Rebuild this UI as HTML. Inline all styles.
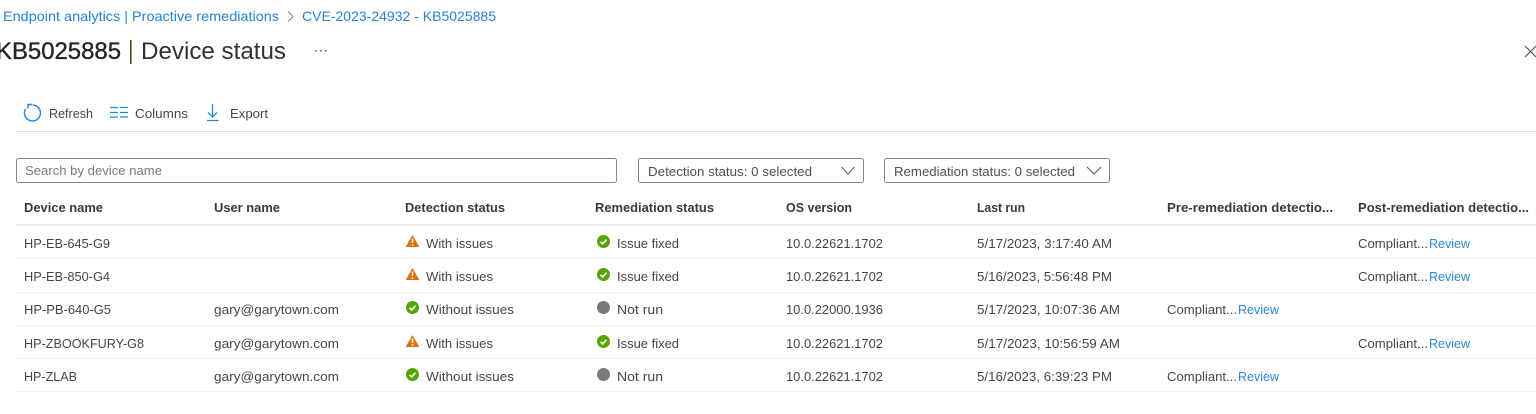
<!DOCTYPE html>
<html><head><meta charset="utf-8"><style>
html,body{margin:0;padding:0;background:#fff;width:1536px;height:414px;overflow:hidden}
svg{display:block;filter:blur(.35px)}
text{font-family:"Liberation Sans",sans-serif;font-size:13px;fill:#484644}
.l{fill:#2583d8}
.h{font-weight:bold;fill:#3b3a39;font-size:12.5px}
</style></head><body>
<svg width="1536" height="414" viewBox="0 0 1536 414" xmlns="http://www.w3.org/2000/svg">
<defs>
<g id="w"><path d="M6.500 1 L12.500 11.500 H0.500 Z" fill="#d9730d" stroke="#d9730d" stroke-linejoin="round"/><path d="M6.500 3.500V8M6.500 9.300V10.800" stroke="#fff" stroke-width="1.500"/></g>
<g id="c"><circle cx="6.500" cy="6.500" r="6.500" fill="#57a300"/><path d="M3.600 6.800L5.700 8.900L9.500 4.600" fill="none" stroke="#fff" stroke-width="1.600"/></g>
<circle id="n" cx="6.500" cy="6.500" r="6.500" fill="#7a7a7a"/>
</defs>

<text class="l" x="3" y="21" style="font-size:14px" textLength="276" lengthAdjust="spacingAndGlyphs">Endpoint analytics | Proactive remediations</text>
<path d="M288 11.500L293 16.500L288 21.500" fill="none" stroke="#8a8886" stroke-width="1"/>
<text class="l" x="302" y="21" style="font-size:14px" textLength="194" lengthAdjust="spacingAndGlyphs">CVE-2023-24932 - KB5025885</text>

<text x="-4" y="59" style="font-size:24px;fill:#252423;stroke:#252423;stroke-width:.35px" textLength="125" lengthAdjust="spacingAndGlyphs">KB5025885</text>
<rect x="130" y="40" width="1.600" height="24" fill="#5c4426"/>
<text x="141" y="59" style="font-size:24px;fill:#323130" textLength="145" lengthAdjust="spacingAndGlyphs">Device status</text>
<g fill="#555"><rect x="315" y="50" width="1.500" height="1.500"/><rect x="320" y="50" width="1.500" height="1.500"/><rect x="325" y="50" width="1.500" height="1.500"/></g>
<path d="M1525 46L1536 57M1536 46L1525 57" stroke="#555" stroke-width="1.200" fill="none"/>

<path d="M33 105A8 8 0 1 1 25.500 109" fill="none" stroke="#2b88d8" stroke-width="1.500"/>
<path d="M28 108.500V104.500H32.500" fill="none" stroke="#2b88d8" stroke-width="1.500"/>
<text x="49" y="118" textLength="44" lengthAdjust="spacingAndGlyphs">Refresh</text>
<path d="M110 107.500H118M110 112.500H118M110 117H118M120 107.500H128M120 112.500H128M120 117H128" stroke="#2b88d8" stroke-width="1.300" fill="none"/>
<text x="135" y="118" textLength="53" lengthAdjust="spacingAndGlyphs">Columns</text>
<path d="M212.500 104V117M208 112.500L212.500 117L217 112.500M207 120.500H218.500" stroke="#2b88d8" stroke-width="1.300" fill="none"/>
<text x="230" y="118" textLength="38" lengthAdjust="spacingAndGlyphs">Export</text>
<rect x="16" y="131" width="1520" height="1" fill="#e1e1e1"/>

<rect x="16.500" y="158.500" width="600" height="24" rx="2" fill="#fff" stroke="#8a8886"/>
<text x="25" y="175" style="fill:#7a7a7a" textLength="137" lengthAdjust="spacingAndGlyphs">Search by device name</text>
<rect x="638.500" y="158.500" width="225" height="24" rx="2" fill="#fff" stroke="#8a8886"/>
<text x="648" y="176" style="fill:#505050" textLength="164" lengthAdjust="spacingAndGlyphs">Detection status: 0 selected</text>
<path d="M841.500 167L848 174L854.500 167" fill="none" stroke="#555" stroke-width="1"/>
<rect x="884.500" y="158.500" width="225" height="24" rx="2" fill="#fff" stroke="#8a8886"/>
<text x="894" y="176" style="fill:#505050" textLength="181" lengthAdjust="spacingAndGlyphs">Remediation status: 0 selected</text>
<path d="M1087 167L1094 174L1101 167" fill="none" stroke="#555" stroke-width="1"/>

<text class="h" x="24" y="212" textLength="79" lengthAdjust="spacingAndGlyphs">Device name</text>
<text class="h" x="214" y="212" textLength="66" lengthAdjust="spacingAndGlyphs">User name</text>
<text class="h" x="405" y="212" textLength="100" lengthAdjust="spacingAndGlyphs">Detection status</text>
<text class="h" x="595" y="212" textLength="119" lengthAdjust="spacingAndGlyphs">Remediation status</text>
<text class="h" x="786" y="212" textLength="66" lengthAdjust="spacingAndGlyphs">OS version</text>
<text class="h" x="977" y="212" textLength="48" lengthAdjust="spacingAndGlyphs">Last run</text>
<text class="h" x="1167" y="212" textLength="166" lengthAdjust="spacingAndGlyphs">Pre-remediation detectio...</text>
<text class="h" x="1358" y="212" textLength="171" lengthAdjust="spacingAndGlyphs">Post-remediation detectio...</text>

<g fill="#f0f0f0">
<rect x="16" y="224" width="1520" height="2"/>
<rect x="16" y="258" width="1520" height="1"/>
<rect x="16" y="292" width="1520" height="1"/>
<rect x="16" y="325" width="1520" height="1"/>
<rect x="16" y="358" width="1520" height="1"/>
<rect x="16" y="391" width="1520" height="1"/>
</g>

<!-- row 1 -->
<text x="24" y="248" textLength="86" lengthAdjust="spacingAndGlyphs">HP-EB-645-G9</text>
<use href="#w" x="406" y="235"/>
<text x="426" y="248" textLength="67" lengthAdjust="spacingAndGlyphs">With issues</text>
<use href="#c" x="597" y="235"/>
<text x="617" y="248" textLength="62" lengthAdjust="spacingAndGlyphs">Issue fixed</text>
<text x="786" y="248" textLength="97" lengthAdjust="spacingAndGlyphs">10.0.22621.1702</text>
<text x="977" y="248" textLength="135" lengthAdjust="spacingAndGlyphs">5/17/2023, 3:17:40 AM</text>
<text x="1358" y="248" textLength="70" lengthAdjust="spacingAndGlyphs">Compliant...</text>
<text x="1429" y="248" textLength="41" lengthAdjust="spacingAndGlyphs" style="fill:#2b88d8">Review</text>

<!-- row 2 -->
<text x="24" y="281" textLength="86" lengthAdjust="spacingAndGlyphs">HP-EB-850-G4</text>
<use href="#w" x="406" y="268"/>
<text x="426" y="281" textLength="67" lengthAdjust="spacingAndGlyphs">With issues</text>
<use href="#c" x="597" y="268"/>
<text x="617" y="281" textLength="62" lengthAdjust="spacingAndGlyphs">Issue fixed</text>
<text x="786" y="281" textLength="97" lengthAdjust="spacingAndGlyphs">10.0.22621.1702</text>
<text x="977" y="281" textLength="135" lengthAdjust="spacingAndGlyphs">5/16/2023, 5:56:48 PM</text>
<text x="1358" y="281" textLength="70" lengthAdjust="spacingAndGlyphs">Compliant...</text>
<text x="1429" y="281" textLength="41" lengthAdjust="spacingAndGlyphs" style="fill:#2b88d8">Review</text>

<!-- row 3 -->
<text x="24" y="314" textLength="87" lengthAdjust="spacingAndGlyphs">HP-PB-640-G5</text>
<text x="214" y="314" textLength="125" lengthAdjust="spacingAndGlyphs">gary@garytown.com</text>
<use href="#c" x="406" y="301"/>
<text x="426" y="314" textLength="88" lengthAdjust="spacingAndGlyphs">Without issues</text>
<use href="#n" x="597" y="301"/>
<text x="617" y="314" textLength="46" lengthAdjust="spacingAndGlyphs">Not run</text>
<text x="786" y="314" textLength="97" lengthAdjust="spacingAndGlyphs">10.0.22000.1936</text>
<text x="977" y="314" textLength="143" lengthAdjust="spacingAndGlyphs">5/17/2023, 10:07:36 AM</text>
<text x="1167" y="314" textLength="70" lengthAdjust="spacingAndGlyphs">Compliant...</text>
<text x="1238" y="314" textLength="41" lengthAdjust="spacingAndGlyphs" style="fill:#2b88d8">Review</text>

<!-- row 4 -->
<text x="24" y="348" textLength="120" lengthAdjust="spacingAndGlyphs">HP-ZBOOKFURY-G8</text>
<text x="214" y="348" textLength="125" lengthAdjust="spacingAndGlyphs">gary@garytown.com</text>
<use href="#w" x="406" y="335"/>
<text x="426" y="348" textLength="67" lengthAdjust="spacingAndGlyphs">With issues</text>
<use href="#c" x="597" y="335"/>
<text x="617" y="348" textLength="62" lengthAdjust="spacingAndGlyphs">Issue fixed</text>
<text x="786" y="348" textLength="97" lengthAdjust="spacingAndGlyphs">10.0.22621.1702</text>
<text x="977" y="348" textLength="143" lengthAdjust="spacingAndGlyphs">5/17/2023, 10:56:59 AM</text>
<text x="1358" y="348" textLength="70" lengthAdjust="spacingAndGlyphs">Compliant...</text>
<text x="1429" y="348" textLength="41" lengthAdjust="spacingAndGlyphs" style="fill:#2b88d8">Review</text>

<!-- row 5 -->
<text x="24" y="381" textLength="53" lengthAdjust="spacingAndGlyphs">HP-ZLAB</text>
<text x="214" y="381" textLength="125" lengthAdjust="spacingAndGlyphs">gary@garytown.com</text>
<use href="#c" x="406" y="368"/>
<text x="426" y="381" textLength="88" lengthAdjust="spacingAndGlyphs">Without issues</text>
<use href="#n" x="597" y="368"/>
<text x="617" y="381" textLength="46" lengthAdjust="spacingAndGlyphs">Not run</text>
<text x="786" y="381" textLength="97" lengthAdjust="spacingAndGlyphs">10.0.22621.1702</text>
<text x="977" y="381" textLength="135" lengthAdjust="spacingAndGlyphs">5/16/2023, 6:39:23 PM</text>
<text x="1167" y="381" textLength="70" lengthAdjust="spacingAndGlyphs">Compliant...</text>
<text x="1238" y="381" textLength="41" lengthAdjust="spacingAndGlyphs" style="fill:#2b88d8">Review</text>
</svg>
</body></html>
